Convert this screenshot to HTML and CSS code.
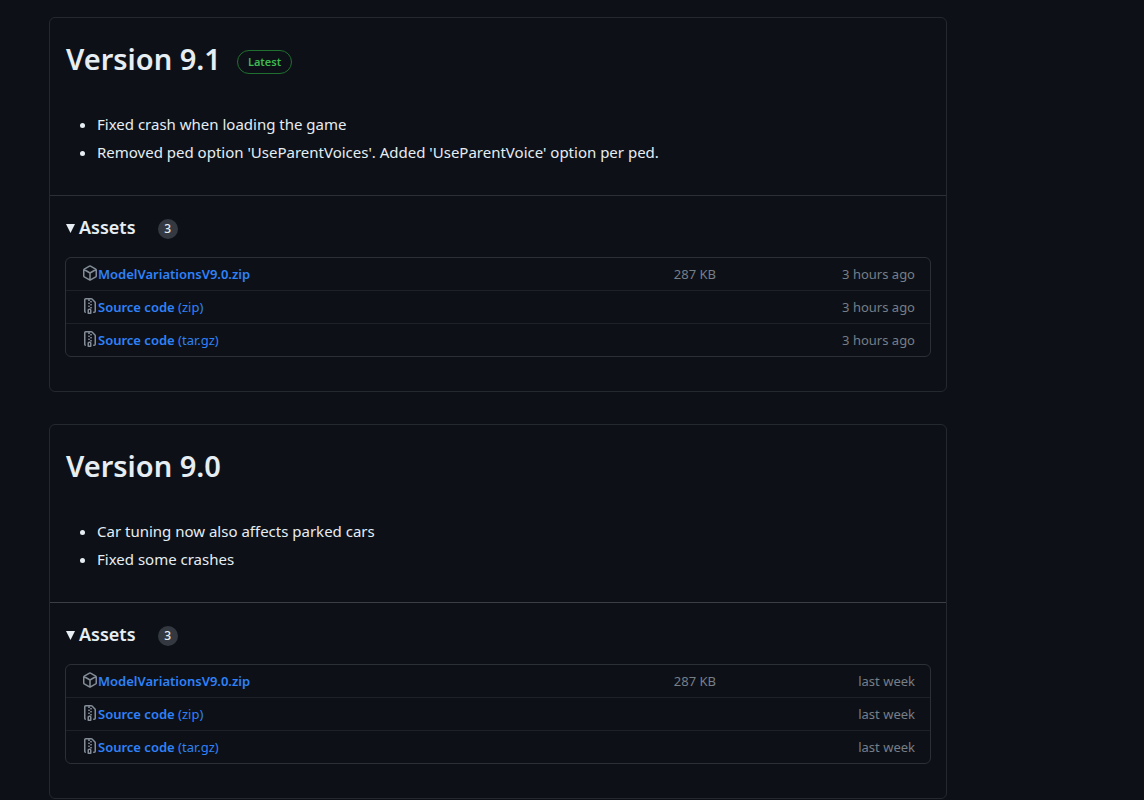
FILE: index.html
```
<!DOCTYPE html>
<html lang="en">
<head>
<meta charset="utf-8">
<title>Releases</title>
<link rel="stylesheet" href="styles.css">
</head>
<body>
<svg class="sprite" aria-hidden="true">
  <symbol id="package" viewBox="0 0 16 16"><path fill="none" stroke="#848d97" stroke-width="1.500" stroke-linejoin="round" d="M7.500 1.050a1 1 0 0 1 1 0l5.250 3.030a1 1 0 0 1 .5.870v6.100a1 1 0 0 1-.5.870L8.500 14.950a1 1 0 0 1-1 0l-5.250-3.030a1 1 0 0 1-.5-.870v-6.100a1 1 0 0 1 .5-.870ZM2 4.500l6 3.500 6-3.500M8 8v7"/></symbol>
  <symbol id="file-zip" viewBox="0 0 16 16"><path d="M3.5 1.75v11.5c0 .09.048.173.126.217a.75.75 0 0 1-.752 1.298A1.748 1.748 0 0 1 2 13.25V1.75C2 .784 2.784 0 3.75 0h5.586c.464 0 .909.185 1.237.513l2.914 2.914c.329.328.513.773.513 1.237v8.586A1.75 1.75 0 0 1 12.25 15h-.5a.75.75 0 0 1 0-1.5h.5a.25.25 0 0 0 .25-.25V4.664a.25.25 0 0 0-.073-.177L9.513 1.573a.25.25 0 0 0-.177-.073H7.25a.75.75 0 0 1 0 1.5h-.5a.75.75 0 0 1 0-1.5h-3a.25.25 0 0 0-.25.25Zm3.75 8.75h.5c.966 0 1.75.784 1.75 1.75v3a.75.75 0 0 1-.75.75h-2.5a.75.75 0 0 1-.75-.75v-3c0-.966.784-1.75 1.75-1.75ZM6 5.25a.75.75 0 0 1 .75-.75h.5a.75.75 0 0 1 0 1.5h-.5A.75.75 0 0 1 6 5.25Zm.75 2.25h.5a.75.75 0 0 1 0 1.5h-.5a.75.75 0 0 1 0-1.5ZM8 6.75A.75.75 0 0 1 8.75 6h.5a.75.75 0 0 1 0 1.5h-.5A.75.75 0 0 1 8 6.75ZM8.75 3h.5a.75.75 0 0 1 0 1.5h-.5a.75.75 0 0 1 0-1.5ZM8 9.75A.75.75 0 0 1 8.75 9h.5a.75.75 0 0 1 0 1.5h-.5A.75.75 0 0 1 8 9.75Zm-1 2.5v2.25h1v-2.25a.25.25 0 0 0-.25-.25h-.5a.25.25 0 0 0-.25.25Z" fill-rule="evenodd"/></symbol>
  <symbol id="triangle" viewBox="0 0 9 9"><path d="M0 0h9L4.500 9z"/></symbol>
</svg>
<main class="releases">
  <section class="card">
    <div class="body">
      <header class="heading"><h1 class="title">Version 9.1</h1><span class="latest">Latest</span></header>
      <ul class="notes">
        <li>Fixed crash when loading the game</li>
        <li>Removed ped option 'UseParentVoices'. Added 'UseParentVoice' option per ped.</li>
      </ul>
    </div>
    <details class="assets" open>
      <summary class="summary"><svg class="caret"><use href="#triangle"/></svg><span class="label">Assets</span><span class="count">3</span></summary>
      <ul class="files">
        <li class="file"><svg class="icon"><use href="#package"/></svg><a class="link" href="#"><b>ModelVariationsV9.0.zip</b></a><span class="size">287 KB</span><span class="date">3 hours ago</span></li>
        <li class="file"><svg class="icon"><use href="#file-zip"/></svg><a class="link" href="#"><b>Source code</b> (zip)</a><span class="date">3 hours ago</span></li>
        <li class="file"><svg class="icon"><use href="#file-zip"/></svg><a class="link" href="#"><b>Source code</b> (tar.gz)</a><span class="date">3 hours ago</span></li>
      </ul>
    </details>
  </section>
  <section class="card">
    <div class="body strong">
      <header class="heading"><h1 class="title">Version 9.0</h1></header>
      <ul class="notes">
        <li>Car tuning now also affects parked cars</li>
        <li>Fixed some crashes</li>
      </ul>
    </div>
    <details class="assets" open>
      <summary class="summary"><svg class="caret"><use href="#triangle"/></svg><span class="label">Assets</span><span class="count">3</span></summary>
      <ul class="files">
        <li class="file"><svg class="icon"><use href="#package"/></svg><a class="link" href="#"><b>ModelVariationsV9.0.zip</b></a><span class="size">287 KB</span><span class="date">last week</span></li>
        <li class="file"><svg class="icon"><use href="#file-zip"/></svg><a class="link" href="#"><b>Source code</b> (zip)</a><span class="date">last week</span></li>
        <li class="file"><svg class="icon"><use href="#file-zip"/></svg><a class="link" href="#"><b>Source code</b> (tar.gz)</a><span class="date">last week</span></li>
      </ul>
    </details>
  </section>
</main>
</body>
</html>
```
FILE: styles.css
```
* { box-sizing: border-box; }
body {
  margin: 0;
  background: #0d1117;
  color: #e6edf3;
  font-family: "Noto Sans", "Open Sans", sans-serif;
  font-size: 15px;
}
.sprite { position: absolute; width: 0; height: 0; }
.releases {
  display: flex;
  flex-direction: column;
  gap: 32px;
  padding: 17px 197px 0 49px;
}
.card { border: 1px solid #24292f; border-radius: 6px; }
.body { padding: 16px 16px 29px; border-bottom: 1px solid #2b3037; }
.body.strong { border-bottom-color: #3a3f47; }
.heading { display: flex; align-items: center; gap: 16px; }
.title { margin: 0; font-size: 29px; font-weight: 600; line-height: 50px; }
.latest {
  margin-top: 6px;
  padding: 0 10px;
  border: 1px solid #1f6f2f;
  border-radius: 12px;
  color: #3fb950;
  font-size: 11px;
  font-weight: 600;
  line-height: 22px;
}
.notes { margin: 26px 0 0; padding-left: 31px; line-height: 28px; }
.assets { padding: 15px 15px 34px; }
.summary {
  display: flex;
  align-items: center;
  margin-bottom: 14px;
  line-height: 32px;
  list-style: none;
  cursor: pointer;
}
.caret { width: 9px; height: 9px; margin: 3px 4px 0 1px; fill: currentColor; }
.label { font-size: 18px; font-weight: 600; }
.count {
  margin: 4px 0 0 22px;
  min-width: 20px;
  border-radius: 10px;
  background: #343941;
  font-size: 12px;
  font-weight: 500;
  line-height: 20px;
  text-align: center;
}
.files {
  margin: 0;
  padding: 0;
  border: 1px solid #2b3037;
  border-radius: 6px;
  list-style: none;
  font-size: 13px;
}
.file { display: flex; align-items: center; padding: 0 15px 0 16px; line-height: 32px; }
.file + .file { border-top: 1px solid #1d2229; }
.icon { flex: none; width: 16px; height: 16px; margin-bottom: 3px; fill: #848d97; }
.link { flex: 1; color: #2f81f7; text-decoration: none; }
.link b { font-weight: 600; }
.size, .date { color: #767e88; }
.date { width: 199px; text-align: right; }
```
